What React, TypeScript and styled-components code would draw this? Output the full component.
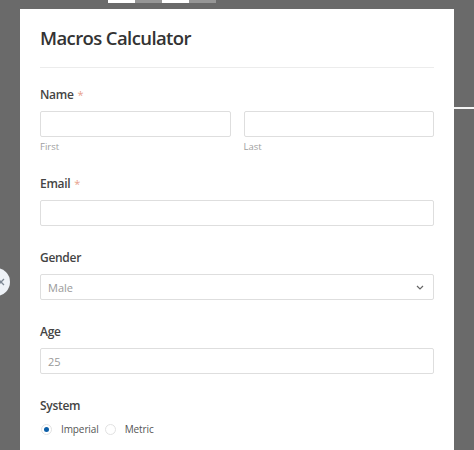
import styled, { createGlobalStyle } from 'styled-components';

const GlobalStyle = createGlobalStyle`
    html, body {
        margin: 0;
        padding: 0;
        background: #6a6a6a;
    }
    body {
        font-family: "Open Sans", "Liberation Sans", sans-serif;
        color: #444;
    }
`;

const Page = styled.div`
    position: relative;
    height: 450px;
    overflow: hidden;
    padding-top: 9px;
    box-sizing: border-box;
`;

const TopTabs = styled.div`
    position: absolute;
    top: 0;
    left: 108px;
    display: flex;
    height: 3px;
`;

const Tab = styled.div<{ light: boolean }>`
    width: 27px;
    background: ${props => props.light ? '#ffffff' : '#969696'};
`;

const SideLine = styled.div`
    position: absolute;
    top: 107px;
    right: 0;
    width: 20px;
    height: 2px;
    background: #f4f4f4;
`;

const CloseButton = styled.div`
    position: absolute;
    left: -18px;
    top: 268px;
    width: 28px;
    height: 28px;
    border-radius: 50%;
    background: #eef2f7;
    display: flex;
    align-items: center;
    justify-content: flex-end;
    padding-right: 5px;
    box-sizing: border-box;
`;

const Card = styled.div`
    margin: 0 20px;
    background: #ffffff;
    padding: 16px 20px 40px;
    min-height: 460px;
    box-sizing: border-box;
`;

const Title = styled.h1`
    margin: 0;
    font-size: 18.5px;
    line-height: 26px;
    font-weight: 600;
    letter-spacing: -0.6px;
    color: #333;
`;

const Divider = styled.div`
    height: 1px;
    background: #ececec;
    margin: 16px 0 18px;
`;

const Field = styled.div<{ gap: number }>`
    margin-bottom: ${props => props.gap}px;
`;

const Label = styled.div`
    font-size: 12px;
    line-height: 18px;
    font-weight: 600;
    letter-spacing: -0.3px;
    color: #444;
    margin-bottom: 7px;
`;

const Required = styled.span`
    color: #e8a08a;
    font-weight: 400;
    margin-left: 4px;
    font-size: 11px;
`;

const Row = styled.div`
    display: grid;
    grid-template-columns: 1fr 1fr;
    column-gap: 13px;
`;

const Input = styled.div`
    height: 26px;
    border: 1px solid #dedede;
    border-radius: 2px;
    box-sizing: border-box;
    display: flex;
    align-items: center;
    justify-content: space-between;
    padding: 0 9px 0 7px;
    font-size: 11px;
    color: #999;
`;

const SubLabel = styled.div`
    font-size: 9.5px;
    line-height: 14px;
    color: #a0a0a0;
    margin-top: 3px;
`;

const RadioGroup = styled.div`
    display: flex;
    align-items: center;
    margin-top: 4px;
`;

const RadioOption = styled.div`
    display: flex;
    align-items: center;
    margin-right: 5px;
    font-size: 10px;
    letter-spacing: -0.1px;
    color: #555;
`;

const RadioCircle = styled.span<{ checked: boolean }>`
    width: 11px;
    height: 11px;
    border-radius: 50%;
    border: 1px solid #e2e2e2;
    box-sizing: border-box;
    display: flex;
    align-items: center;
    justify-content: center;
    margin-right: 9px;
    margin-left: 1px;
    &::after {
        content: '';
        width: 5px;
        height: 5px;
        border-radius: 50%;
        background: ${props => props.checked ? '#0b5ea8' : 'transparent'};
    }
`;

const Chevron = () => (
    <svg width="8" height="5" viewBox="0 0 8 5" fill="none">
        <path d="M1 1l3 3 3-3" stroke="#666" strokeWidth="1.2" />
    </svg>
);

const CloseIcon = () => (
    <svg width="8" height="8" viewBox="0 0 8 8" fill="none">
        <path d="M1 1l6 6M7 1L1 7" stroke="#7d8894" strokeWidth="1.3" />
    </svg>
);

const App = () => {
    return (
        <Page>
            <GlobalStyle />
            <TopTabs>
                <Tab light />
                <Tab light={false} />
                <Tab light />
                <Tab light={false} />
            </TopTabs>
            <SideLine />
            <CloseButton><CloseIcon /></CloseButton>
            <Card>
                <Title>Macros Calculator</Title>
                <Divider />
                <Field gap={21}>
                    <Label>Name<Required>*</Required></Label>
                    <Row>
                        <div>
                            <Input />
                            <SubLabel>First</SubLabel>
                        </div>
                        <div>
                            <Input />
                            <SubLabel>Last</SubLabel>
                        </div>
                    </Row>
                </Field>
                <Field gap={23}>
                    <Label>Email<Required>*</Required></Label>
                    <Input />
                </Field>
                <Field gap={23}>
                    <Label>Gender</Label>
                    <Input>Male<Chevron /></Input>
                </Field>
                <Field gap={23}>
                    <Label>Age</Label>
                    <Input>25</Input>
                </Field>
                <Field gap={0}>
                    <Label>System</Label>
                    <RadioGroup>
                        <RadioOption><RadioCircle checked />Imperial</RadioOption>
                        <RadioOption><RadioCircle checked={false} />Metric</RadioOption>
                    </RadioGroup>
                </Field>
            </Card>
        </Page>
    );
};

export default App;
